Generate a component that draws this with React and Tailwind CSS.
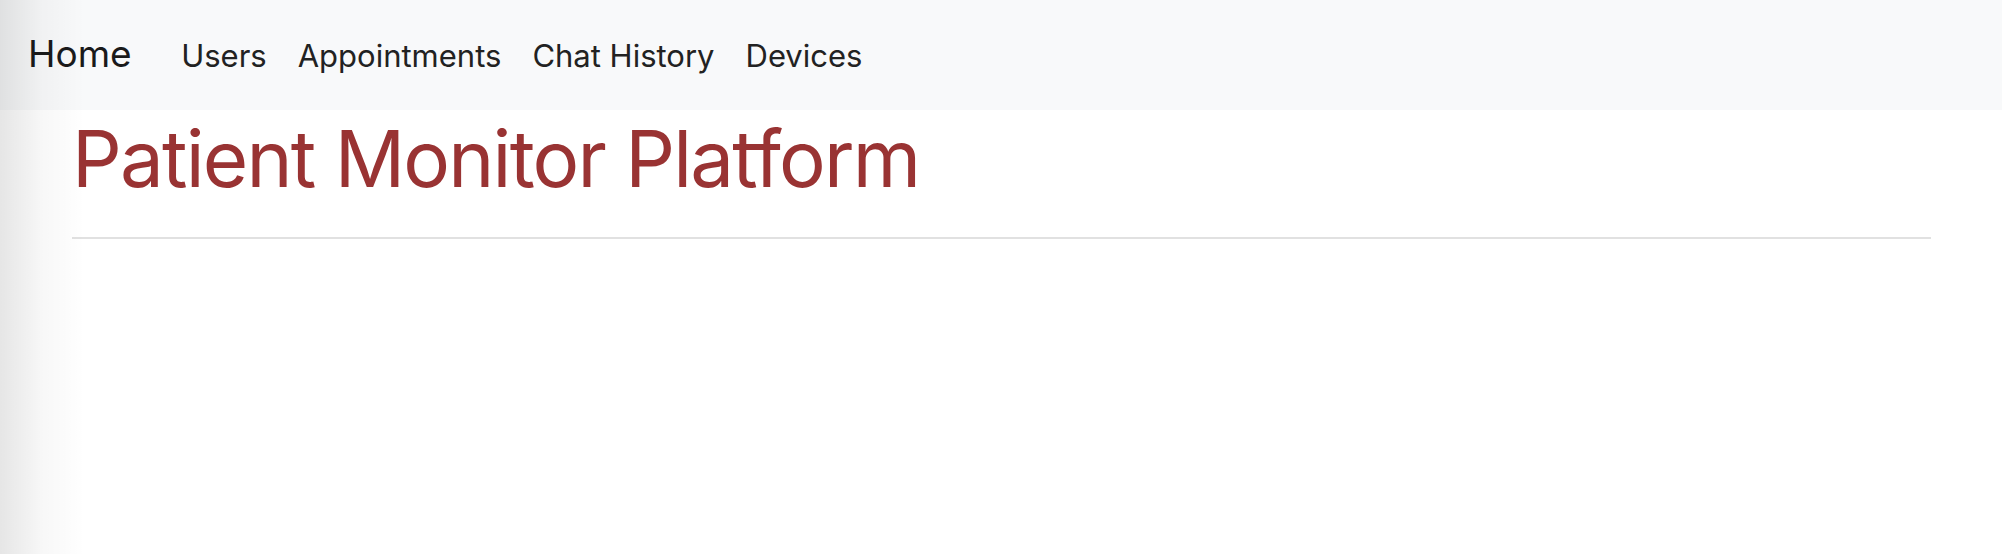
export default function App() {
  const links = ['Users', 'Appointments', 'Chat History', 'Devices'];

  return (
    <div className="relative min-h-[554px] bg-white font-['Inter',sans-serif]">
      <nav className="h-[110px] bg-[#f8f9fa] flex items-baseline pt-[35px] pl-[28px]">
        <a href="#" className="text-[37px] leading-none text-[#1a1a1a]">
          Home
        </a>
        <ul className="flex items-baseline ml-[34px]">
          {links.map((l) => (
            <li key={l}>
              <a href="#" className="block px-[15.5px] text-[31px] leading-none text-[#222]">
                {l}
              </a>
            </li>
          ))}
        </ul>
      </nav>

      <div className="pl-[72px] pr-[71px]">
        <h1 className="mt-[10px] text-[78px] leading-none tracking-[-1.8px] text-[#993333]">
          Patient Monitor Platform
        </h1>
        <hr className="mt-[39px] border-0 h-[2px] bg-[#e1e1e1]" />
      </div>

      <div className="pointer-events-none absolute inset-y-0 left-0 w-[85px] bg-gradient-to-r from-black/10 via-black/[0.03] to-transparent" />
    </div>
  );
}
